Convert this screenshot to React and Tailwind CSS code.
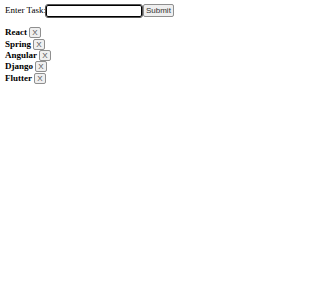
const tasks = ['React', 'Spring', 'Angular', 'Django', 'Flutter']

export default function App() {
  return (
    <div className="min-h-[290px] bg-white p-[5px] text-[9px] leading-[11px] text-black" style={{ fontFamily: '"Liberation Serif", "Times New Roman", serif' }}>
      <form className="flex items-center h-[13px] mt-[-1px]" onSubmit={(e) => e.preventDefault()}>
        <label>Enter Task:</label>
        <input
          type="text"
          className="w-[96px] h-[12px] border border-black rounded-[2px] outline outline-1 outline-[#555] bg-white"
        />
        <button
          type="submit"
          className="ml-[1px] h-[13px] px-[2px] border border-[#8f8f8f] rounded-[2px] bg-[#efefef] text-[8px] leading-[11px] text-[#333]"
          style={{ fontFamily: '"Liberation Sans", Arial, sans-serif' }}
        >
          Submit
        </button>
      </form>
      <ul className="mt-[10px]">
        {tasks.map((t) => (
          <li key={t} className="flex items-center h-[11.4px]">
            <span className="font-bold">{t}</span>
            <button
              type="button"
              className="ml-[2px] w-[12px] h-[11px] border border-[#8f8f8f] rounded-[2px] bg-[#efefef] text-[8px] leading-[9px] text-[#555]"
              style={{ fontFamily: '"Liberation Sans", Arial, sans-serif' }}
            >
              X
            </button>
          </li>
        ))}
      </ul>
    </div>
  )
}
